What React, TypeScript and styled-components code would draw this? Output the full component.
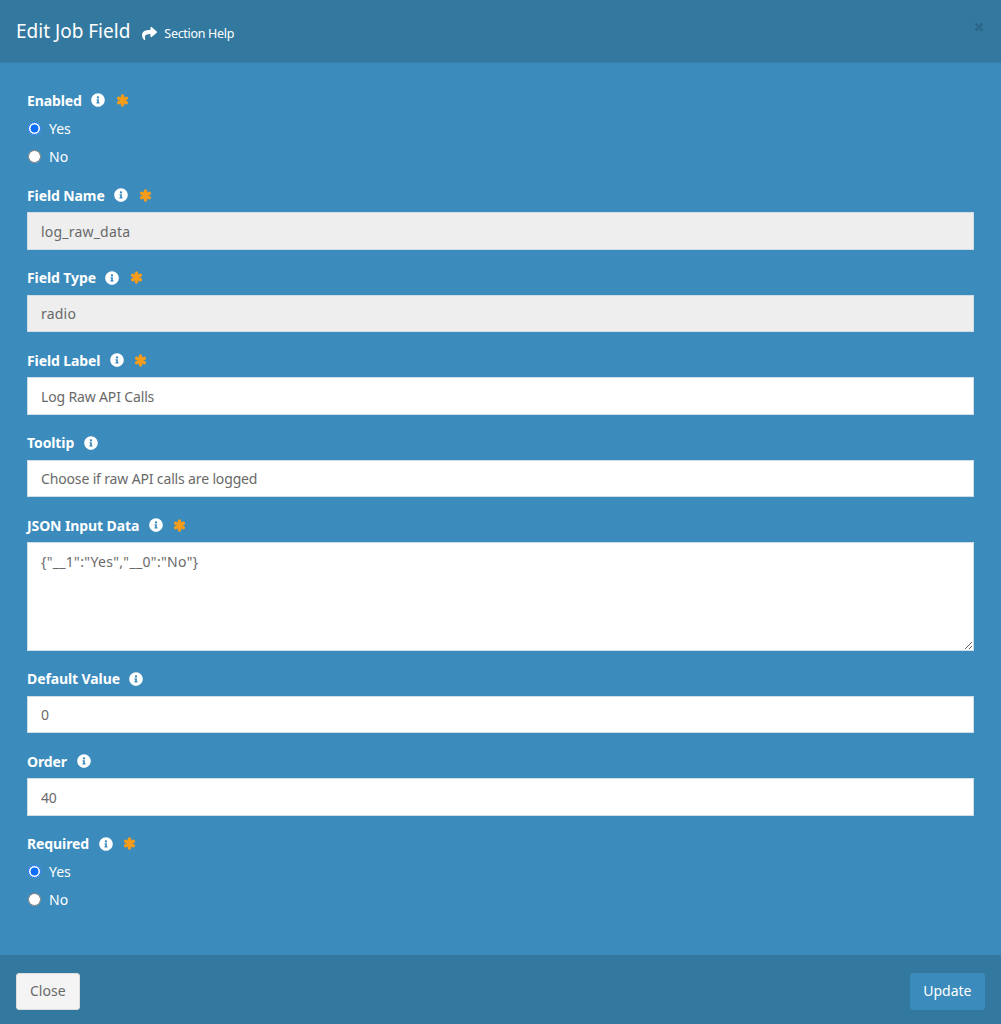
import styled, { createGlobalStyle } from 'styled-components'
import { FaInfoCircle, FaShare, FaTimes } from 'react-icons/fa'

const GlobalStyle = createGlobalStyle`
  html, body {
    margin: 0;
    padding: 0;
    background: #3b8bbd;
  }
  body {
    font-family: "Noto Sans", "Open Sans", sans-serif;
    font-size: 14px;
  }
`

const Modal = styled.div`
  width: 1001px;
  height: 1024px;
  display: flex;
  flex-direction: column;
  background: #3b8bbd;
  color: #fff;
`

const Header = styled.header`
  height: 63px;
  box-sizing: border-box;
  flex: none;
  display: flex;
  align-items: center;
  padding: 0 16px;
  background: #33799f;
  border-bottom: 1px solid #3580a9;
`

const Title = styled.h4`
  margin: 0;
  font-size: 19px;
  font-weight: 400;
`

const HelpLink = styled.a`
  display: flex;
  align-items: center;
  gap: 7px;
  margin: 5px 0 0 12px;
  font-size: 12.5px;
  letter-spacing: -0.3px;
  color: #fff;
`

const CloseIcon = styled.button`
  margin: 0 0 8px auto;
  padding: 0;
  display: flex;
  border: 0;
  background: none;
  color: #2c6688;
`

const Body = styled.form`
  flex: 1;
  padding: 25px 27px 0;
`

const Field = styled.div`
  margin-bottom: 16px;
`

const Label = styled.label`
  display: flex;
  align-items: center;
  height: 24px;
  margin-bottom: 5px;
  font-size: 14px;
  font-weight: 700;
  letter-spacing: -0.1px;
`

const InfoIcon = styled(FaInfoCircle)`
  width: 14px;
  height: 14px;
  margin-left: 9.5px;
`

const RequiredIcon = styled.svg`
  width: 13px;
  height: 13px;
  margin-left: 10.5px;
  stroke: #f59c1a;
  stroke-width: 3.4;
  stroke-linecap: round;
  fill: none;
`

const RadioRow = styled.label`
  display: flex;
  align-items: center;
  height: 28px;
  font-size: 14px;
`

const RadioInput = styled.input`
  width: 13px;
  height: 13px;
  margin: 0 8px 0 1px;
  accent-color: #0d6efd;
`

const RadioGroup = styled.div`
  margin-top: -3px;
  margin-bottom: 13px;
`

const TextInput = styled.input`
  display: block;
  width: 100%;
  height: 37.5px;
  box-sizing: border-box;
  padding: 1px 13px 0;
  border: 1px solid #cfdde6;
  border-radius: 0;
  font-family: inherit;
  font-size: 14px;
  letter-spacing: ${p => (p.readOnly ? '0.2px' : '-0.15px')};
  color: #696969;
  background: ${p => (p.readOnly ? '#eeeeee' : '#ffffff')};
  outline: none;
`

const TextArea = styled.textarea`
  display: block;
  width: 100%;
  height: 108.5px;
  box-sizing: border-box;
  padding: 9px 13px;
  border: 1px solid #cfdde6;
  border-radius: 0;
  font-family: inherit;
  font-size: 14px;
  letter-spacing: 0.33px;
  color: #696969;
  background: #fff;
  outline: none;
`

const Footer = styled.footer`
  height: 69px;
  box-sizing: border-box;
  flex: none;
  display: flex;
  align-items: center;
  justify-content: space-between;
  padding: 3px 16px 0;
  background: #33799f;
`

const Button = styled.button<{ $primary?: boolean }>`
  height: 37px;
  padding: 0 ${p => (p.$primary ? '12.5px' : '13px')} 1px;
  border: 1px solid ${p => (p.$primary ? '#3b8bbd' : '#dddddd')};
  border-radius: 3px;
  font-family: inherit;
  font-size: 14px;
  color: ${p => (p.$primary ? '#ffffff' : '#696969')};
  background: ${p => (p.$primary ? '#3b8bbd' : '#f4f4f4')};
`

const Asterisk = () => (
  <RequiredIcon viewBox="0 0 13 13">
    <path d="M6.5 2v9M2.6 4.25l7.8 4.5M10.4 4.25l-7.8 4.5" />
  </RequiredIcon>
)

const FieldLabel = ({ text, required }: { text: string; required?: boolean }) => (
  <Label>
    {text}
    <InfoIcon />
    {required && <Asterisk />}
  </Label>
)

const YesNo = ({ name }: { name: string }) => (
  <RadioGroup>
    <RadioRow>
      <RadioInput type="radio" name={name} defaultChecked />
      Yes
    </RadioRow>
    <RadioRow>
      <RadioInput type="radio" name={name} />
      No
    </RadioRow>
  </RadioGroup>
)

export default function App() {
  return (
    <Modal>
      <GlobalStyle />
      <Header>
        <Title>Edit Job Field</Title>
        <HelpLink>
          <FaShare size={15} />
          Section Help
        </HelpLink>
        <CloseIcon type="button">
          <FaTimes size={12} />
        </CloseIcon>
      </Header>
      <Body>
        <FieldLabel text="Enabled" required />
        <YesNo name="enabled" />
        <Field>
          <FieldLabel text="Field Name" required />
          <TextInput readOnly value="log_raw_data" />
        </Field>
        <Field>
          <FieldLabel text="Field Type" required />
          <TextInput readOnly value="radio" />
        </Field>
        <Field>
          <FieldLabel text="Field Label" required />
          <TextInput defaultValue="Log Raw API Calls" />
        </Field>
        <Field>
          <FieldLabel text="Tooltip" />
          <TextInput defaultValue="Choose if raw API calls are logged" />
        </Field>
        <Field>
          <FieldLabel text="JSON Input Data" required />
          <TextArea defaultValue={'{"__1":"Yes","__0":"No"}'} />
        </Field>
        <Field>
          <FieldLabel text="Default Value" />
          <TextInput defaultValue="0" />
        </Field>
        <Field>
          <FieldLabel text="Order" />
          <TextInput defaultValue="40" />
        </Field>
        <FieldLabel text="Required" required />
        <YesNo name="required" />
      </Body>
      <Footer>
        <Button type="button">Close</Button>
        <Button type="button" $primary>Update</Button>
      </Footer>
    </Modal>
  )
}
